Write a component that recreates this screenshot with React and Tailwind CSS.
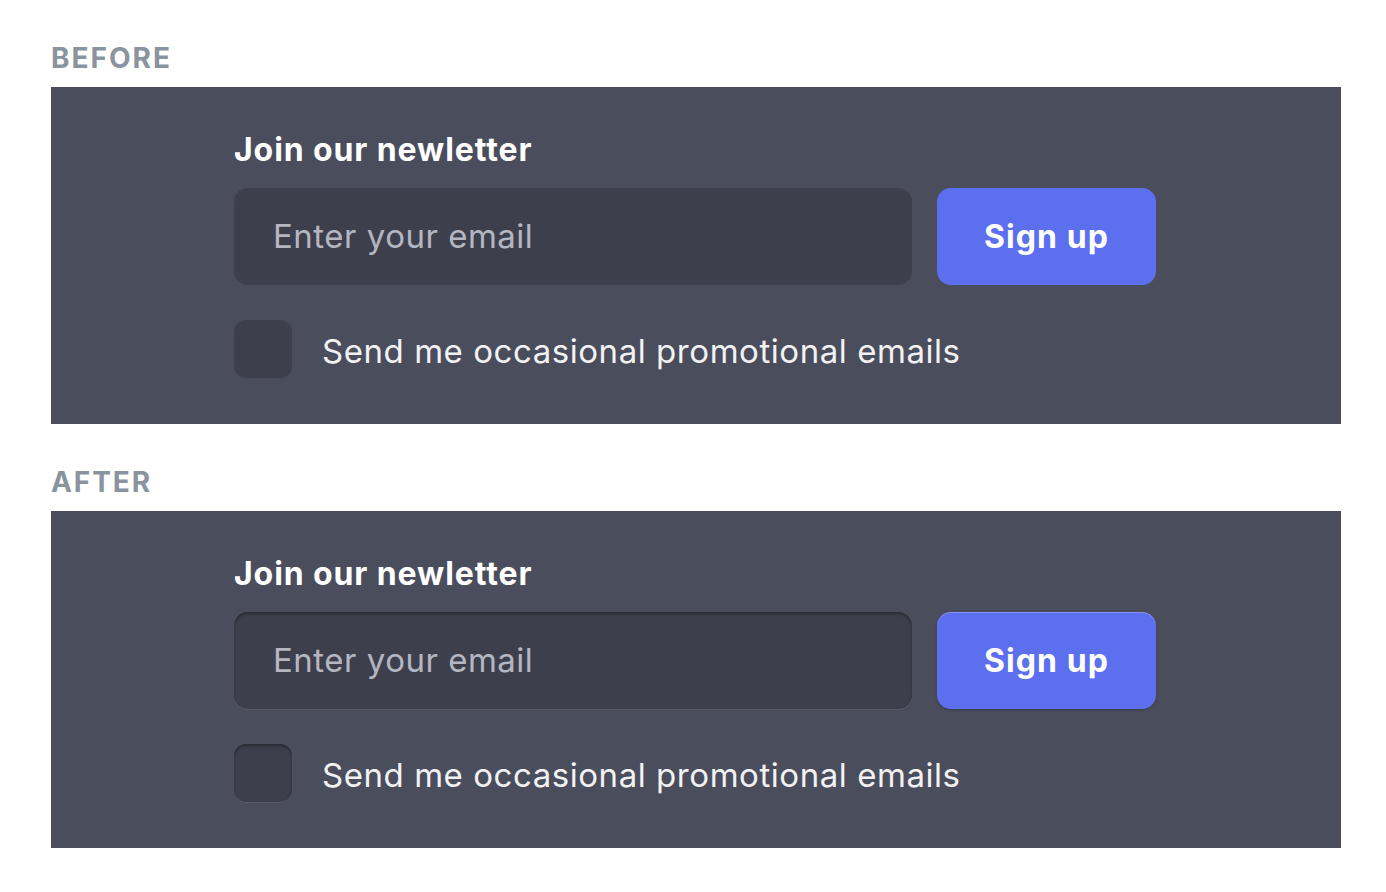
import React from "react";

function Panel({ after }) {
  return (
    <div className="bg-[#4a4d5c] pl-[183px] pt-[39px] pb-[46px]">
      <h2 className="text-[32px] leading-[48px] font-bold text-white tracking-[0.9px]">Join our newletter</h2>
      <div className="mt-[14px] flex gap-[25px]">
        <div
          className={
            "w-[678px] h-[97px] rounded-[14px] bg-[#3d404c] flex items-center pl-[39px] " +
            (after ? "shadow-[inset_0_2px_3px_rgba(0,0,0,0.35),0_1px_0_rgba(255,255,255,0.08)]" : "")
          }
        >
          <span className="text-[33px] text-[#b4b7c2] tracking-[0.5px]">Enter your email</span>
        </div>
        <button
          className={
            "w-[219px] h-[97px] rounded-[14px] bg-[#5c6fee] text-white text-[32px] font-bold tracking-[1.1px] " +
            (after ? "shadow-[inset_0_1px_0_rgba(255,255,255,0.25),0_1px_3px_rgba(0,0,0,0.25)]" : "")
          }
        >
          Sign up
        </button>
      </div>
      <div className="mt-[35px] h-[58px] flex items-center gap-[30px]">
        <div
          className={
            "w-[58px] h-[58px] rounded-[12px] bg-[#3d404c] " +
            (after ? "shadow-[inset_0_2px_3px_rgba(0,0,0,0.35),0_1px_0_rgba(255,255,255,0.08)]" : "")
          }
        />
        <span className="pt-[4px] text-[33px] leading-[58px] text-[#f2f2f4] tracking-[0.55px]">Send me occasional promotional emails</span>
      </div>
    </div>
  );
}

export default function App() {
  return (
    <div className="w-[1386px] h-[892px] bg-white pl-[51px] pr-[45px] pt-[40px]" style={{ fontFamily: "Inter, 'Noto Sans', sans-serif" }}>
      <div className="text-[28px] leading-[36px] font-bold text-[#8a93a0] tracking-[2px] mb-[11px]">BEFORE</div>
      <Panel />
      <div className="mt-[40px] text-[28px] leading-[36px] font-bold text-[#8a93a0] tracking-[1.9px] mb-[11px]">AFTER</div>
      <Panel after />
    </div>
  );
}
